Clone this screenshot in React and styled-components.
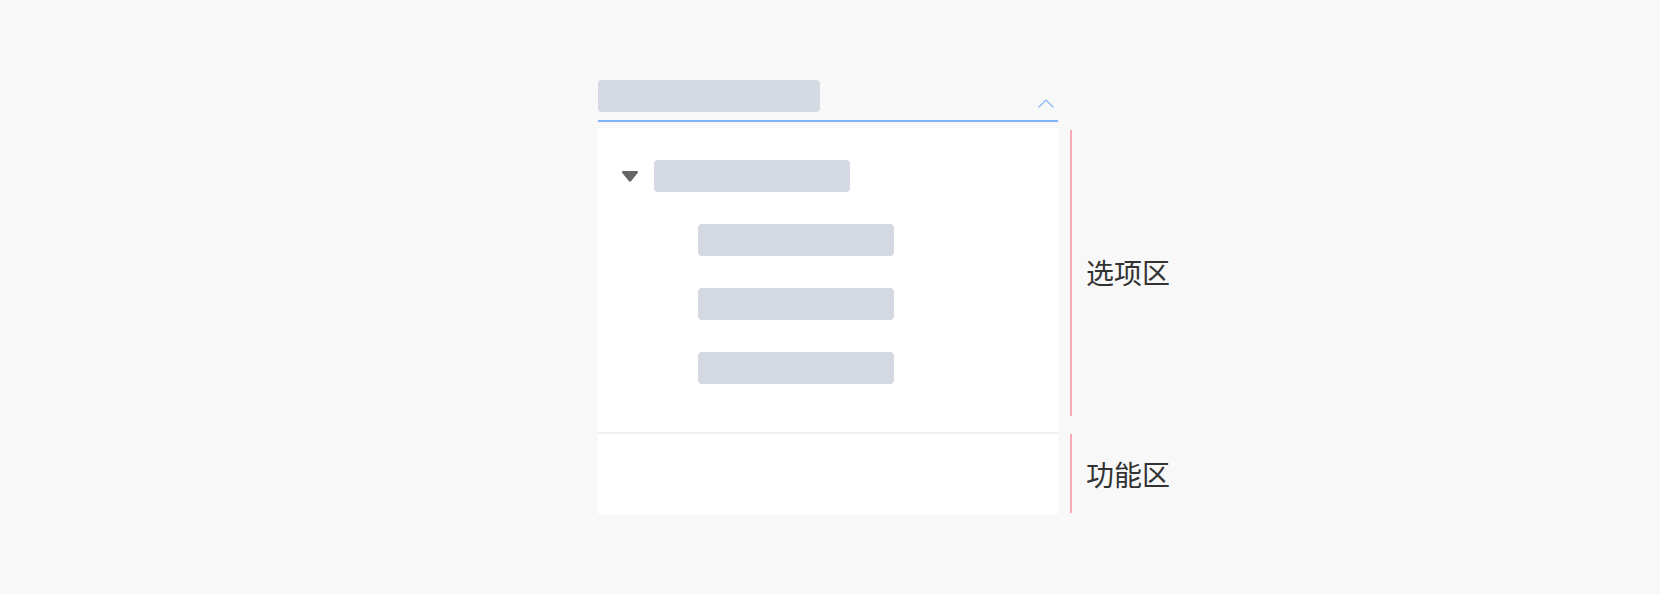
import React from 'react';
import styled, { createGlobalStyle } from 'styled-components';

const GlobalStyle = createGlobalStyle`
  html, body {
    margin: 0;
    background: #f8f8f8;
    font-family: "Noto Sans", "Noto Sans CJK SC", sans-serif;
  }
`;

const Page = styled.div`
  width: 1660px;
  height: 594px;
  box-sizing: border-box;
  padding: 80px 0 0 598px;
  display: flex;
  align-items: flex-start;
`;

const Select = styled.div`
  width: 460px;
  display: flex;
  flex-direction: column;
`;

const Trigger = styled.div`
  height: 40px;
  display: flex;
  justify-content: space-between;
  align-items: flex-start;
  border-bottom: 2px solid #80b4fa;
`;

const Placeholder = styled.div`
  width: ${p => p.w}px;
  height: 32px;
  border-radius: 4px;
  background: #d5d9e4;
  flex-shrink: 0;
`;

const Chevron = styled.svg`
  margin: 19px 4px 0 0;
  display: block;
`;

const Dropdown = styled.div`
  margin-top: 6px;
  background: #fff;
`;

const Options = styled.div`
  height: 304px;
  box-sizing: border-box;
  padding: 32px 0 0 24px;
  display: flex;
  flex-direction: column;
  gap: 32px;
`;

const Row = styled.div`
  display: flex;
  align-items: center;
  gap: 16px;
  padding-left: ${p => (p.child ? 76 : 0)}px;
`;

const Caret = styled.svg`
  display: block;
`;

const Divider = styled.div`
  height: 2px;
  background: #eef0f5;
`;

const Footer = styled.div`
  height: 80px;
`;

const Notes = styled.div`
  margin-left: 12px;
  padding-top: 50px;
  display: flex;
  flex-direction: column;
  gap: 18px;
`;

const Note = styled.div`
  height: ${p => p.h}px;
  display: flex;
  align-items: center;
  border-left: 2px solid #f8a9b5;
  box-sizing: border-box;
  padding-left: 14px;
`;

const NoteLabel = styled.span`
  font-size: 28px;
  line-height: 1;
  color: #333;
  margin-top: ${p => p.offset || 0}px;
`;

const App = () => (
  <>
    <GlobalStyle />
    <Page>
      <Select>
        <Trigger>
          <Placeholder w={222} />
          <Chevron width="16" height="9" viewBox="0 0 16 9">
            <polyline points="0.5,8.5 8,1 15.5,8.5" fill="none" stroke="#84b5f8" strokeWidth="1.2" />
          </Chevron>
        </Trigger>
        <Dropdown>
          <Options>
            <Row>
              <Caret width="16" height="11" viewBox="0 0 16 11">
                <path
                  d="M1.2 0h13.6c1 0 1.5 1.1 .9 1.9L9 10.2c-.5.6-1.5.6-2 0L.3 1.9C-.3 1.1.2 0 1.2 0z"
                  fill="#666"
                />
              </Caret>
              <Placeholder w={196} />
            </Row>
            {[0, 1, 2].map(i => (
              <Row child key={i}>
                <Placeholder w={196} />
              </Row>
            ))}
          </Options>
          <Divider />
          <Footer />
        </Dropdown>
      </Select>
      <Notes>
        <Note h={286}>
          <NoteLabel>选项区</NoteLabel>
        </Note>
        <Note h={79}>
          <NoteLabel offset={2}>功能区</NoteLabel>
        </Note>
      </Notes>
    </Page>
  </>
);

export default App;
